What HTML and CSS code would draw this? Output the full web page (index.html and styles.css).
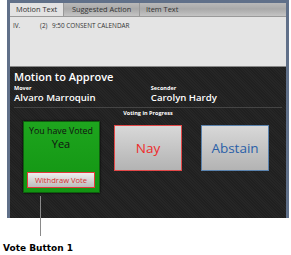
FILE: index.html
```html
<!DOCTYPE html>
<html lang="en">
<head>
    <meta charset="UTF-8">
    <title>Vote Button</title>
    <link rel="stylesheet" href="styles.css">
</head>
<body>

    <div class="shot">
        <div class="frame">

            <!-- Tabs -->
            <div class="tabs">
                <div class="tab active">Motion Text</div>
                <div class="tab">Suggested Action</div>
                <div class="tab">Item Text</div>
            </div>

            <div class="tab-body">
                <span class="num">IV.</span>
                <span class="sub">(2)</span>
                <span>9:50 CONSENT CALENDAR</span>
            </div>

            <!-- Motion panel -->
            <div class="motion">
                <div class="motion-title">Motion to Approve</div>
                <div class="people">
                    <div class="person">
                        <div class="label">Mover</div>
                        <div class="name">Alvaro Marroquin</div>
                    </div>
                    <div class="person">
                        <div class="label">Seconder</div>
                        <div class="name">Carolyn Hardy</div>
                    </div>
                </div>
                <div class="status">Voting in Progress</div>

                <div class="votes">
                    <div class="cell">
                        <div class="voted">
                            <div class="voted-text">You have Voted</div>
                            <div class="voted-value">Yea</div>
                            <div class="withdraw">Withdraw Vote</div>
                        </div>
                    </div>
                    <div class="cell">
                        <div class="vote nay">Nay</div>
                    </div>
                    <div class="cell">
                        <div class="vote abstain">Abstain</div>
                    </div>
                </div>
            </div>
        </div>

        <!-- Callout -->
        <div class="callout-line"></div>
        <div class="callout">Vote Button 1</div>
    </div>

</body>
</html>
```

FILE: styles.css
```css
body {
    margin: 0;
    background: #fff;
    font-family: "Open Sans", sans-serif;
}

.shot {
    position: relative;
    width: 291px;
    height: 255px;
}

.frame {
    margin-left: 7px;
    width: 276px;
    border: 3px solid #607089;
    border-bottom: 0;
}

/* Tabs */
.tabs {
    display: flex;
    height: 13px;
    background: linear-gradient(#b9b9b9, #a9a9a9 45%, #c4c4c4);
    border-bottom: 1px solid #9a9a9a;
}

.tab {
    font-size: 7.4px;
    color: #333;
    line-height: 13px;
    padding: 0 6px 0 7px;
    border-right: 1px solid #999;
}

.tab.active {
    background: #e2e2e2;
    padding: 0 5px 0 6px;
    width: 42px;
}

.tab:nth-child(2) {
    padding: 0 7px 0 8px;
    width: 60px;
}

.tab:last-child {
    border-right: 0;
    padding-left: 6px;
}

.tab-body {
    height: 50px;
    background: #e4e4e4;
    border-bottom: 1px solid #888;
    font-size: 6.4px;
    color: #333;
    padding: 4px 0 0 3px;
    box-sizing: border-box;
    display: flex;
}

.tab-body .num {
    width: 27px;
}

.tab-body .sub {
    width: 12px;
}

/* Motion panel */
.motion {
    height: 151px;
    background: #232323;
    background-image: repeating-linear-gradient(45deg, #262626 0 1px, #202020 1px 2px);
    color: #fff;
    padding: 3px 4px 0 4px;
    box-sizing: border-box;
}

.motion-title {
    font-size: 11px;
    font-weight: 600;
    line-height: 13px;
}

.people {
    display: flex;
    margin-top: 2px;
}

.person {
    width: 140px;
}

.person:first-child {
    width: 146px;
}

.label {
    font-size: 5.5px;
    font-weight: 700;
    line-height: 7px;
}

.name {
    font-size: 9.6px;
    font-weight: 600;
    line-height: 12px;
}

.status {
    margin-top: 3px;
    border-top: 1px solid #444;
    text-align: center;
    font-size: 5.5px;
    font-weight: 700;
    line-height: 9px;
    padding-top: 1px;
}

.votes {
    display: grid;
    grid-template-columns: 87px 87px 87px;
    justify-content: center;
    margin-top: 3px;
}

.cell {
    display: flex;
    justify-content: center;
}

.voted {
    width: 77px;
    height: 72px;
    box-sizing: border-box;
    background: linear-gradient(#1ea51e, #129412);
    border: 1px solid #0d5f0d;
    box-shadow: 0 0 2px #000;
    color: #111;
    text-align: center;
    display: flex;
    flex-direction: column;
    align-items: center;
}

.voted-text {
    font-size: 8.8px;
    line-height: 12px;
    margin-top: 3px;
}

.voted-value {
    font-size: 11px;
    line-height: 13px;
}

.withdraw {
    margin-top: auto;
    margin-bottom: 4px;
    width: 68px;
    height: 16px;
    box-sizing: border-box;
    border: 1px solid #e23a3a;
    background: linear-gradient(#eeeeee, #bdbdbd);
    color: #d83030;
    font-size: 7.6px;
    line-height: 14px;
}

.vote {
    width: 68px;
    height: 46px;
    margin-top: 4px;
    box-sizing: border-box;
    background: linear-gradient(#d8d8d8, #b3b3b3);
    text-align: center;
    font-size: 13.5px;
    line-height: 44px;
}

.vote.nay {
    border: 1px solid #e24848;
    color: #ee2a2a;
}

.vote.abstain {
    border: 1px solid #5a82ad;
    color: #2a5fa8;
}

/* Callout */
.callout-line {
    position: absolute;
    left: 40px;
    top: 196px;
    width: 1px;
    height: 40px;
    background: #8a8a8a;
}

.callout {
    position: absolute;
    left: 3px;
    top: 243px;
    font-family: "DejaVu Sans", sans-serif;
    font-weight: 700;
    font-size: 9px;
    color: #000;
}
```
